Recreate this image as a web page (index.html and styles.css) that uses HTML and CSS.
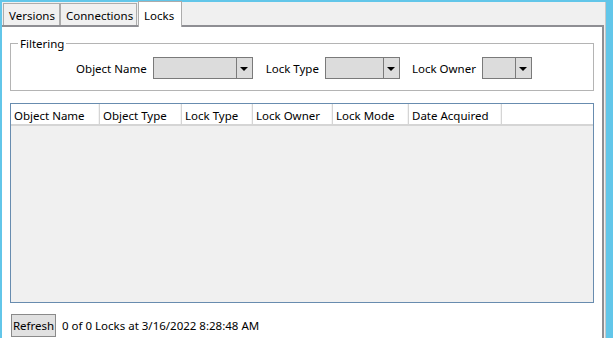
FILE: index.html
```html
<!DOCTYPE html>
<html>
<head>
<meta charset="utf-8">
<link rel="stylesheet" href="styles.css">
</head>
<body>
<div class="frame">
  <div class="tabctl">
    <div class="tabstrip">
      <div class="tab tab-versions">Versions</div>
      <div class="tab tab-connections">Connections</div>
      <div class="tab tab-locks selected">Locks</div>
    </div>
    <div class="panel">
      <fieldset class="group">
        <legend>Filtering</legend>
        <div class="filters">
          <span class="lbl">Object Name</span>
          <div class="combo combo-name"><div class="combo-field"></div><div class="combo-btn"><span class="arrow"></span></div></div>
          <span class="lbl lbl-gap">Lock Type</span>
          <div class="combo combo-type"><div class="combo-field"></div><div class="combo-btn"><span class="arrow"></span></div></div>
          <span class="lbl lbl-gap2">Lock Owner</span>
          <div class="combo combo-owner"><div class="combo-field"></div><div class="combo-btn"><span class="arrow"></span></div></div>
        </div>
      </fieldset>
      <div class="grid">
        <div class="grid-head">
          <div class="col c1">Object Name</div>
          <div class="col c2">Object Type</div>
          <div class="col c3">Lock Type</div>
          <div class="col c4">Lock Owner</div>
          <div class="col c5">Lock Mode</div>
          <div class="col c6">Date Acquired</div>
          <div class="col-fill"></div>
        </div>
        <div class="grid-body"></div>
      </div>
      <div class="footer">
        <button class="btn">Refresh</button>
        <span class="status">0 of 0 Locks at 3/16/2022 8:28:48 AM</span>
      </div>
    </div>
  </div>
</div>
</body>
</html>
```

FILE: styles.css
```css
* { box-sizing: border-box; }
html, body { margin: 0; padding: 0; }
body {
  font-family: "Noto Sans", "Open Sans", sans-serif;
  font-size: 11.5px;
  color: #000;
  overflow: hidden;
}
.frame {
  width: 613px;
  height: 338px;
  background: #62c6e9;
  padding: 2px 7px 0 2px;
  overflow: hidden;
}
.tabctl {
  height: 100%;
  background: #f0f0f0;
  display: flex;
  flex-direction: column;
  border-right: 1px solid #c8c8c8;
}
.tabstrip {
  height: 23px;
  display: flex;
  align-items: flex-end;
  padding-left: 1px;
  position: relative;
  z-index: 2;
}
.tab {
  height: 22px;
  line-height: 20px;
  padding: 2px 5px 0;
  border: 1px solid #acacac;
  border-bottom: none;
  background: #f0f0f0;
  white-space: nowrap;
}
.tab-versions { width: 57px; }
.tab-connections { width: 77px; }
.tab-locks { width: 44px; }
.tab.selected {
  height: 26px;
  margin-bottom: -2px;
  background: #fff;
  line-height: 22px;
  padding-top: 3px;
  margin-left: 1px;
}
.panel {
  flex: 1;
  background: #fff;
  border-top: 2px solid #8e8e93;
  border-right: 2px solid #8e8e93;
  margin-right: 1px;
  display: flex;
  flex-direction: column;
  padding: 0 8px;
}
.group {
  margin: 8px 0 0 0;
  padding: 6px 0 11px 7px;
  border: 1px solid #b4b4b4;
  min-width: 0;
}
.group legend {
  padding: 1px 2px 0;
  line-height: 15px;
  height: 16px;
}
.filters {
  display: flex;
  align-items: center;
  justify-content: center;
  height: 22px;
  margin-left: -3px;
}
.lbl { white-space: nowrap; margin-right: 6px; padding-top: 1px; }
.lbl-gap { margin-left: 13px; }
.lbl-gap2 { margin-left: 12px; }
.combo {
  height: 22px;
  border: 1px solid #7a7a7a;
  background: #dcdcdc;
  display: flex;
}
.combo-name { width: 100px; }
.combo-type { width: 75px; }
.combo-owner { width: 50px; }
.combo-field { flex: 1; }
.combo-btn {
  width: 16px;
  border-left: 1px solid #7a7a7a;
  display: flex;
  align-items: center;
  justify-content: center;
}
.arrow {
  width: 0; height: 0;
  border-left: 4px solid transparent;
  border-right: 4px solid transparent;
  border-top: 4px solid #000;
  margin-top: 1px;
}
.grid {
  margin-top: 12px;
  height: 200px;
  border: 1px solid #688caf;
  background: #f0f0f0;
  display: flex;
  flex-direction: column;
}
.grid-head {
  height: 22px;
  background: #fff;
  display: flex;
  border-bottom: 2px solid #d5d5d5;
}
.col {
  padding: 3px 0 0 3px;
  line-height: 17px;
  white-space: nowrap;
  border-right: 1px solid #d5d5d5;
  box-shadow: inset -1px 0 0 #f4f4f4;
}
.c1 { width: 89px; }
.c2 { width: 82px; }
.c3 { width: 71px; }
.c4 { width: 80px; }
.c5 { width: 76px; }
.c6 { width: 93px; }
.col-fill { flex: 1; }
.grid-body { flex: 1; }
.footer {
  margin-top: 11px;
  display: flex;
  align-items: center;
  height: 23px;
}
.btn {
  font: inherit;
  color: #000;
  height: 23px;
  width: 45px;
  padding: 0;
  border: 1px solid #8a8a8a;
  background: #e1e1e1;
  margin-left: 1px;
}
.status { margin-left: 6px; white-space: nowrap; }
```
